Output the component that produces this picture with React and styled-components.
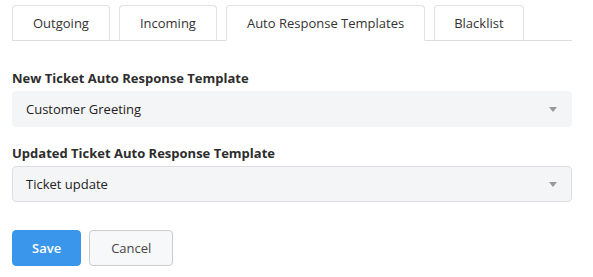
import React, { useState } from 'react'
import styled, { createGlobalStyle } from 'styled-components'

const GlobalStyle = createGlobalStyle`
  body {
    margin: 0;
    background: #fff;
    font-family: "Open Sans", "Liberation Sans", sans-serif;
    color: #333;
  }
`

const Page = styled.div`
  width: 560px;
  padding: 5px 0 0 12px;
`

const Tabs = styled.div`
  display: flex;
  gap: 9px;
  border-bottom: 1px solid #ddd;
  height: 35px;
`

const Tab = styled.button`
  height: 36px;
  padding: 0 ${p => p.$pad}px;
  background: #fff;
  border: 1px solid #e2e2e2;
  border-bottom-color: ${p => (p.$active ? '#fff' : '#ddd')};
  border-radius: 4px 4px 0 0;
  font: 13px "Open Sans", sans-serif;
  color: #333;
  cursor: pointer;
`

const Form = styled.div`
  padding-top: 28px;
`

const Field = styled.div`
  margin-bottom: 17px;
`

const Label = styled.div`
  font: 700 13px/18px "Open Sans", sans-serif;
  color: #2d2d2d;
  margin-bottom: 4px;
`

const Select = styled.div`
  position: relative;
  height: 36px;
  box-sizing: border-box;
  display: flex;
  align-items: center;
  padding: 0 13px;
  background: #f4f5f7;
  border: 1px solid ${p => (p.$bordered ? '#dcdde0' : '#f4f5f7')};
  border-radius: 4px;
  font-size: 13px;
  color: #222;
`

const Arrow = styled.span`
  position: absolute;
  right: 14px;
  top: 50%;
  margin-top: -2px;
  width: 0;
  height: 0;
  border-left: 4px solid transparent;
  border-right: 4px solid transparent;
  border-top: 5px solid #999;
`

const Actions = styled.div`
  display: flex;
  gap: 8px;
  padding-top: 11px;
`

const Button = styled.button`
  height: 36px;
  padding: 0 ${p => p.$pad}px;
  border-radius: 4px;
  font: ${p => (p.$primary ? 600 : 400)} 13px "Open Sans", sans-serif;
  border: 1px solid ${p => (p.$primary ? '#3a96ea' : '#ccc')};
  background: ${p => (p.$primary ? '#3a96ea' : '#f7f8fa')};
  color: ${p => (p.$primary ? '#fff' : '#444')};
  cursor: pointer;
`

const tabs = [
  { title: 'Outgoing', pad: 20 },
  { title: 'Incoming', pad: 20 },
  { title: 'Auto Response Templates', pad: 20 },
  { title: 'Blacklist', pad: 19 },
]

export default function App() {
  const [active, setActive] = useState(2)

  return (
    <Page>
      <GlobalStyle />
      <Tabs>
        {tabs.map((t, i) => (
          <Tab key={t.title} $pad={t.pad} $active={i === active} onClick={() => setActive(i)}>
            {t.title}
          </Tab>
        ))}
      </Tabs>
      <Form>
        <Field>
          <Label>New Ticket Auto Response Template</Label>
          <Select>
            Customer Greeting
            <Arrow />
          </Select>
        </Field>
        <Field>
          <Label>Updated Ticket Auto Response Template</Label>
          <Select $bordered>
            Ticket update
            <Arrow />
          </Select>
        </Field>
        <Actions>
          <Button $primary $pad={19}>Save</Button>
          <Button $pad={21}>Cancel</Button>
        </Actions>
      </Form>
    </Page>
  )
}
